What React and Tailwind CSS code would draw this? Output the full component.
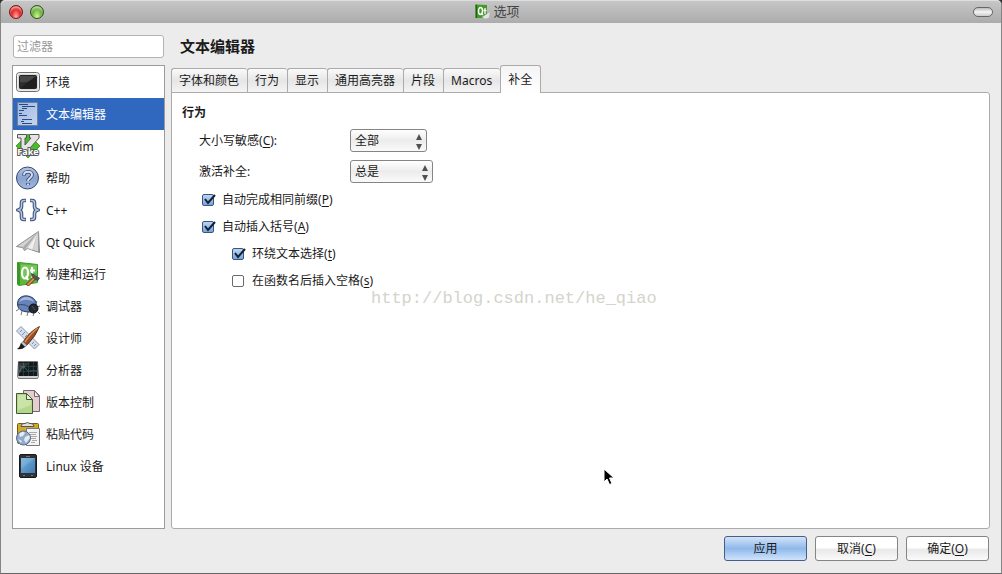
import { useState } from 'react';

const EnvironmentIcon = () => (
  <svg className="h-6 w-6" viewBox="0 0 24 24">
    <rect x="0.5" y="2.5" width="23" height="19" rx="3" fill="#d9d9d9" stroke="#6c6c6c" />
    <rect x="1.5" y="3.5" width="21" height="17" rx="2" fill="none" stroke="#ececec" />
    <rect x="3.5" y="5.5" width="17" height="13" rx="1" fill="#252525" stroke="#222" />
    <path d="M4 6h16L4 18z" fill="#484848" />
    <path d="M4 12c6 1 12-1 16-5v11H4z" fill="#1c1c1c" opacity=".6" />
  </svg>
);

const TextEditorIcon = () => (
  <svg className="h-6 w-6" viewBox="0 0 24 24">
    <defs>
      <linearGradient id="page" x1="0" y1="0" x2="1" y2="1">
        <stop offset="0" stopColor="#9fb9e2" />
        <stop offset="1" stopColor="#c3d3ee" />
      </linearGradient>
    </defs>
    <rect x="1.5" y="0.5" width="20" height="23" fill="url(#page)" stroke="#6d7f9f" />
    <path
      d="M3 2.500h9M6 4.500h13M6 6.500h5M3 8.500h5M3 11.500h3M3 13.500h8M6 17.500h10M5 19.500h3M6 21.500h10"
      stroke="#2a4a82"
    />
  </svg>
);

const FakeVimIcon = () => (
  <svg className="h-6 w-6" viewBox="0 0 24 24">
    <path d="M12 0l12 12-12 12L0 12z" fill="#45c022" stroke="#2c7a18" strokeWidth=".7" />
    <path
      d="M1.500.5h9v3.500H9v7l6-7h-1.500V.5h9.500v3.500L9.500 19H5V4H1.500z"
      fill="#e4e4e4"
      stroke="#555"
    />
    <text
      x="12"
      y="21"
      textAnchor="middle"
      fontFamily="Noto Sans"
      fontWeight="bold"
      fontSize="9"
      fill="#fff"
      stroke="#5a5a5a"
      strokeWidth="2"
      paintOrder="stroke"
    >
      Fake
    </text>
  </svg>
);

const HelpIcon = () => (
  <svg className="h-6 w-6" viewBox="0 0 24 24">
    <defs>
      <linearGradient id="help" x1="0" y1="0" x2="0" y2="1">
        <stop offset="0" stopColor="#b4c4e2" />
        <stop offset="0.500" stopColor="#8aa2cf" />
        <stop offset="1" stopColor="#a3b8de" />
      </linearGradient>
    </defs>
    <circle cx="11.500" cy="12" r="11" fill="url(#help)" stroke="#34476e" />
    <path d="M8 9.500c0-5 8-5 8-.5 0 3-4 3-4 6M12 17v2" fill="none" stroke="#34476e" strokeWidth="3.600" />
    <path d="M8 9c0-4.500 8-4.500 8 0 0 3-4 3-4 6M12 17.500v1.500" fill="none" stroke="#d3def0" strokeWidth="2" />
  </svg>
);

const CppIcon = () => (
  <svg className="h-6 w-6" viewBox="0 0 24 24" fill="none">
    <path
      d="M10 2.500H8Q5.500 2.500 5.500 5v3.500Q5.500 11 2.500 12 5.500 13 5.500 15.500V19Q5.500 21.500 8 21.500h2M14 2.500h2q2.500 0 2.500 2.500v3.500q0 2.500 3 3.500-3 1-3 3.500V19q0 2.500-2.500 2.500h-2"
      stroke="#3d5073"
      strokeWidth="3.600"
    />
    <path
      d="M9.500 2.500H8Q5.500 2.500 5.500 5v3.500Q5.500 11 2.500 12 5.500 13 5.500 15.500V19Q5.500 21.500 8 21.500h1.500M14.500 2.500H16q2.500 0 2.500 2.500v3.500q0 2.500 3 3.500-3 1-3 3.500V19q0 2.500-2.500 2.500h-1.500"
      stroke="#b5c7e4"
      strokeWidth="1.500"
    />
  </svg>
);

const QtQuickIcon = () => (
  <svg className="h-6 w-6" viewBox="0 0 24 24">
    <path d="M22.500 1.500L.5 16.500l6 1 2 3 3-2 12 4z" fill="#d4d4d4" stroke="#8a8a8a" />
    <path d="M22 2L7 17l1.500 3z" fill="#aaa" />
    <path d="M22 2L11.500 18l5 2z" fill="#efefef" stroke="#bbb" strokeWidth=".5" />
    <path d="M22.500 2v20" stroke="#999" />
  </svg>
);

const BuildIcon = () => (
  <svg className="h-6 w-6" viewBox="0 0 24 24">
    <path d="M1.500.5h2L21.500 2.500v18L3 23.500l-1.500-1z" fill="#5cb83c" stroke="#3c9a2c" />
    <path d="M1.500.5L4 1.500v21.500l-2.500-1z" fill="#3a9428" />
    <path d="M5 2.500l16 1v7L5 16z" fill="#85cf68" opacity=".6" />
    <ellipse cx="9" cy="11" rx="3" ry="5.500" fill="none" stroke="#fff" strokeWidth="2.200" />
    <path d="M10 14l2 4M16 5v9q0 2 2 1.500M14 8.500h5" fill="none" stroke="#fff" strokeWidth="2.200" />
    <path d="M11 23.500l8-8" stroke="#6b3710" strokeWidth="3.500" />
    <path d="M11.500 23l8-8" stroke="#e08c4c" strokeWidth="2" />
    <path d="M15 11.500q3 0 5 3l3.500 1.500-1.500 2.500-3-1-3-3z" fill="#555" stroke="#333" strokeWidth=".6" />
  </svg>
);

const DebuggerIcon = () => (
  <svg className="h-6 w-6" viewBox="0 0 24 24" fill="none">
    <path d="M3 15l-3 2M6 17l-1 4M12 18l-1 4M18 19l-1 3M20 9l1-2M21 13l3-1M22 18l2 2" stroke="#777" />
    <path d="M1.500 10C1.500-1 17 0 20 8c1 5-1 10-6 10-5 0-12.500-1-12.500-8z" fill="#6883b9" stroke="#263a64" />
    <path d="M3 8C6 1 15 2 18 8 13 5 8 5 3 8z" fill="#a5b8dc" />
    <path d="M2 11c6-1 9 0 13 4" stroke="#34496f" />
    <circle cx="17.500" cy="14.500" r="4.500" fill="#222932" stroke="#111" />
    <path d="M16 12l3 4" stroke="#4a5668" />
  </svg>
);

const DesignerIcon = () => (
  <svg className="h-6 w-6" viewBox="0 0 24 24" fill="none">
    <path d="M5 .5L.5 5l18 18 4.500-4.500z" fill="#d5deed" stroke="#8795ae" />
    <path d="M6 4L4 6M9 6l-3 3M11 9l-2 2M13 11l-3 3M18 16l-2 2M20 18l-2 2" stroke="#7f8ca4" />
    <path d="M23.500.5Q14 5 7 16l4 3Q20 10 23.500.5z" fill="#9b4e21" stroke="#45210c" strokeWidth=".8" />
    <path d="M22 2Q14 8 9 16" stroke="#d88d52" strokeWidth="1.500" />
    <path d="M7 15.500l4 3.500-2 2-4-3.500z" fill="#c3c3c3" stroke="#555" strokeWidth=".6" />
    <path d="M5 17l4 4q-3 3-8 2 3-2 4-6z" fill="#1c1c1c" />
  </svg>
);

const AnalyzerIcon = () => (
  <svg className="h-6 w-6" viewBox="0 0 24 24" fill="none">
    <path d="M2.500 3.500h19l1 15-1 2h-19l-1-2z" fill="#d0d0d0" stroke="#777" />
    <rect x="2.500" y="4" width="19" height="14" fill="#14191b" />
    <path d="M2.500 8.500h19M2.500 13.500h19M7.500 4v14M12.500 4v14M17.500 4v14" stroke="#263b3e" />
    <path d="M3 15q3-9 6-5t5 3 7 0" stroke="#2e5a61" />
    <path d="M3 5h10L3 15z" fill="#fff" opacity=".15" />
  </svg>
);

const VersionControlIcon = () => (
  <svg className="h-6 w-6" viewBox="0 0 24 24">
    <path d="M7.500.5h11l5 5v16h-16z" fill="#e4cdd1" stroke="#77686b" />
    <path d="M18.500.5v6h5z" fill="#f6ebed" stroke="#77686b" />
    <path d="M.5 3.500h10l6 6v14H.5z" fill="#b4d58c" stroke="#405932" />
    <path d="M2 5h8v5h5v5L2 20z" fill="#d2e8b4" opacity=".7" />
    <path d="M10.500 3.500v6h6z" fill="#e6f3d4" stroke="#405932" />
  </svg>
);

const PasteIcon = () => (
  <svg className="h-6 w-6" viewBox="0 0 24 24">
    <rect x="1.500" y="1.500" width="21" height="20" rx="1" fill="#d3a92c" stroke="#7b5c0e" />
    <path d="M5 4.500q0-3 3-3h1q2-2 5 0h1q3 0 3 3z" fill="#ddd" stroke="#555" />
    <path d="M10.500 6.500h13v17h-13z" fill="#f4f4f4" stroke="#777" />
    <path d="M13 10.500h8M13 12.500h7M15 14.500h6M15 16.500h5M16 18.500h5M15 20.500h4" stroke="#aaa" />
    <circle cx="7.500" cy="16" r="7" fill="#91a9cb" stroke="#54698c" />
    <path d="M3 12q4-4 6-1l-2 3-3 1zM9 15l4-2 1 3-4 5-2-3zM2 17l4 2-1 2z" fill="#e4eaf2" />
  </svg>
);

const DeviceIcon = () => (
  <svg className="h-6 w-6" viewBox="0 0 24 24">
    <defs>
      <linearGradient id="screen" x1="0" y1="0" x2="1" y2="1">
        <stop offset="0" stopColor="#77b2df" />
        <stop offset="1" stopColor="#3e7db2" />
      </linearGradient>
    </defs>
    <rect x="3.500" y="0.500" width="17" height="23" rx="1.500" fill="#303237" stroke="#16181c" />
    <rect x="5" y="4" width="14" height="15" fill="url(#screen)" />
    <path d="M10 2.500h4M7 21.500h2M15 21.500h2" stroke="#777" />
    <path d="M5 4h14L5 15z" fill="#fff" opacity=".12" />
  </svg>
);

const WindowIcon = () => (
  <svg className="h-4 w-4" viewBox="0 0 16 16" fill="none">
    <path d="M.5.5L12 1v13L1 14z" fill="#419b26" />
    <path d="M.5.5L2 1v13H.5z" fill="#21630f" />
    <ellipse cx="5.500" cy="7" rx="2" ry="3.500" stroke="#fff" strokeWidth="1.400" />
    <path d="M6 9l2 2M10 4v6M8.500 6.500h3" stroke="#fff" strokeWidth="1.300" />
    <path d="M15.500 7.500L7 13l3 2 4-1z" fill="#e4e4e4" stroke="#aaa" strokeWidth=".5" />
  </svg>
);

const categories = [
  { name: '环境', icon: EnvironmentIcon },
  { name: '文本编辑器', icon: TextEditorIcon },
  { name: 'FakeVim', icon: FakeVimIcon },
  { name: '帮助', icon: HelpIcon },
  { name: 'C++', icon: CppIcon },
  { name: 'Qt Quick', icon: QtQuickIcon },
  { name: '构建和运行', icon: BuildIcon },
  { name: '调试器', icon: DebuggerIcon },
  { name: '设计师', icon: DesignerIcon },
  { name: '分析器', icon: AnalyzerIcon },
  { name: '版本控制', icon: VersionControlIcon },
  { name: '粘贴代码', icon: PasteIcon },
  { name: 'Linux 设备', icon: DeviceIcon }
];

const tabs = ['字体和颜色', '行为', '显示', '通用高亮器', '片段', 'Macros', '补全'];

// Underlined accelerator key, e.g. (C)
const Key = ({ children }) => (
  <>
    (<span className="underline underline-offset-2">{children}</span>)
  </>
);

const SelectBox = ({ id, width, options }) => (
  <div className={`relative ${width}`}>
    <select
      id={id}
      className="block h-[23px] w-full appearance-none rounded-[3px] border border-[#858585] bg-linear-to-b from-white via-[#ececec] to-[#fafafa] pl-1 leading-5"
    >
      {options.map((option) => (
        <option key={option}>{option}</option>
      ))}
    </select>
    <svg className="pointer-events-none absolute top-1 right-1 h-[17px] w-2" viewBox="0 0 8 17" fill="#505050">
      <path d="M4 1l3 6H1zM4 17l3-6H1z" />
    </svg>
  </div>
);

const CheckBox = ({ defaultChecked, children }) => (
  <label className="flex h-[27px] items-center gap-2">
    <span className="relative block h-3 w-3">
      <input
        type="checkbox"
        defaultChecked={defaultChecked}
        className="peer block h-3 w-3 appearance-none rounded-[2px] border border-[#6b6b6b] bg-white checked:border-[#3d5478] checked:bg-linear-to-b checked:from-[#bcd4f3] checked:to-[#75a5e0]"
      />
      <svg
        className="pointer-events-none absolute -top-px left-0 hidden h-[13px] w-[14px] peer-checked:block"
        viewBox="0 0 14 13"
        fill="none"
      >
        <path d="M3 6l3 4 7-8" stroke="#151f2e" strokeWidth="2" />
      </svg>
    </span>
    <span>{children}</span>
  </label>
);

const plainButton = 'border-[#858585] bg-linear-to-b from-white from-45% via-[#e9e9e9] via-55% to-[#fafafa]';
const defaultButton = 'border-[#465f86] bg-linear-to-b from-[#d3e3f8] via-[#8fb8ea] to-[#cfe4fc]';

const App = () => {
  const [category, setCategory] = useState('文本编辑器');
  const [tab, setTab] = useState('补全');

  return (
    <div className="min-h-screen bg-[#303030] font-['Noto_Sans','Noto_Sans_CJK_SC',sans-serif] text-xs text-[#1a1a1a]">
      <div className="relative flex min-h-screen flex-col rounded-t-[5px] border border-t-0 border-[#858585] border-b-[#666] bg-[#ececec]">
        <header className="flex h-[23px] items-center rounded-t-[5px] border-t border-[#dedede] bg-linear-to-b from-[#c6c6c6] to-[#acacac] px-2">
          <div className="flex flex-1 gap-[7px]">
            <button
              aria-label="关闭"
              className="h-[14px] w-[14px] rounded-full border border-[#701818] bg-radial-[at_50%_90%] from-[#ffb0a8] via-[#e92a2a] to-[#b51c1c] shadow-[inset_0_2px_2px_#ffffff99]"
            />
            <button
              aria-label="最大化"
              className="h-[14px] w-[14px] rounded-full border border-[#2c5516] bg-radial-[at_50%_90%] from-[#d8f6a0] via-[#74b83f] to-[#417d22] shadow-[inset_0_2px_2px_#ffffff99]"
            />
          </div>
          <div className="flex items-center gap-[3px] pr-2 text-[13px] text-[#444]">
            <WindowIcon />
            <h1>选项</h1>
          </div>
          <div className="flex flex-1 justify-end">
            <button
              aria-label="最小化"
              className="h-[10px] w-5 rounded-full border border-[#666] bg-linear-to-b from-[#bbb] via-[#f4f4f4] to-[#ccc]"
            />
          </div>
        </header>

        <main className="flex flex-1 gap-[6px] px-[11px] pt-3">
          <aside className="flex w-[153px] flex-col gap-[7px]">
            <input
              type="text"
              aria-label="过滤器"
              placeholder="过滤器"
              className="mx-px h-[23px] rounded-[3px] border border-[#b3b3b3] bg-white px-[3px] placeholder:text-[#999]"
            />
            <nav className="flex-1 border border-[#9b9b9b] bg-white">
              {categories.map(({ name, icon: Icon }) => (
                <button
                  key={name}
                  onClick={() => setCategory(name)}
                  className={`flex h-8 w-full items-center gap-[6px] pl-[3px] text-left ${
                    category === name ? 'bg-[#3068c0] text-white' : ''
                  }`}
                >
                  <Icon />
                  <span className="pt-[2px]">{name}</span>
                </button>
              ))}
            </nav>
          </aside>

          <section className="flex flex-1 flex-col">
            <h2 className="h-[30px] pl-[9px] text-[15px] leading-[22px] font-bold">文本编辑器</h2>
            <div role="tablist" className="flex h-7 items-end">
              {tabs.map((name) => (
                <button
                  key={name}
                  role="tab"
                  aria-selected={tab === name}
                  onClick={() => setTab(name)}
                  className={`rounded-t-[3px] border border-[#ababab] pr-2 pl-[7px] ${
                    tab === name
                      ? 'relative h-7 border-b-0 bg-linear-to-b from-[#f4f4f4] to-white'
                      : 'h-[25px] border-r-0 bg-linear-to-b from-[#fafafa] via-[#e6e6e6] to-[#f4f4f4]'
                  }`}
                >
                  {name}
                </button>
              ))}
            </div>
            <div className="-mt-px flex-1 rounded-b-[3px] rounded-tr-[3px] border border-[#ababab] bg-white px-[10px] pt-[10px]">
              <h3 className="h-[22px] leading-5 font-bold">行为</h3>
              <div className="flex flex-col gap-2 pt-1 pl-[17px]">
                <div className="flex items-center">
                  <label htmlFor="case" className="w-[151px]">
                    大小写敏感
                    <Key>C</Key>:
                  </label>
                  <SelectBox id="case" width="w-[77px]" options={['全部', '无', '首字母']} />
                </div>
                <div className="flex items-center">
                  <label htmlFor="activate" className="w-[151px]">
                    激活补全:
                  </label>
                  <SelectBox id="activate" width="w-[83px]" options={['总是', '手动', '触发时']} />
                </div>
              </div>
              <div className="pt-[3px] pl-5">
                <CheckBox defaultChecked>
                  自动完成相同前缀
                  <Key>P</Key>
                </CheckBox>
                <CheckBox defaultChecked>
                  自动插入括号
                  <Key>A</Key>
                </CheckBox>
                <div className="pl-[30px]">
                  <CheckBox defaultChecked>
                    环绕文本选择
                    <Key>t</Key>
                  </CheckBox>
                  <CheckBox>
                    在函数名后插入空格
                    <Key>s</Key>
                  </CheckBox>
                </div>
              </div>
            </div>
          </section>
        </main>

        <footer className="flex justify-end gap-2 px-3 pt-[7px] pb-3">
          <button className={`h-[25px] w-[83px] rounded-[3px] border ${defaultButton}`}>应用</button>
          <button className={`h-[25px] w-[83px] rounded-[3px] border ${plainButton}`}>
            取消
            <Key>C</Key>
          </button>
          <button className={`h-[25px] w-[83px] rounded-[3px] border ${plainButton}`}>
            确定
            <Key>O</Key>
          </button>
        </footer>

        <p className="pointer-events-none absolute top-[287px] left-[370px] font-['Liberation_Mono',monospace] text-[17px] leading-6 text-[#d4d4cc]">
          http://blog.csdn.net/he_qiao
        </p>
        <svg className="pointer-events-none absolute top-[468px] left-[602px] h-[18px] w-3" viewBox="0 0 12 18">
          <path d="M1 1v13l3-3 2.500 5.500 2.500-1L6.500 10H11z" fill="#000" stroke="#fff" />
        </svg>
      </div>
    </div>
  );
};

export default App;
